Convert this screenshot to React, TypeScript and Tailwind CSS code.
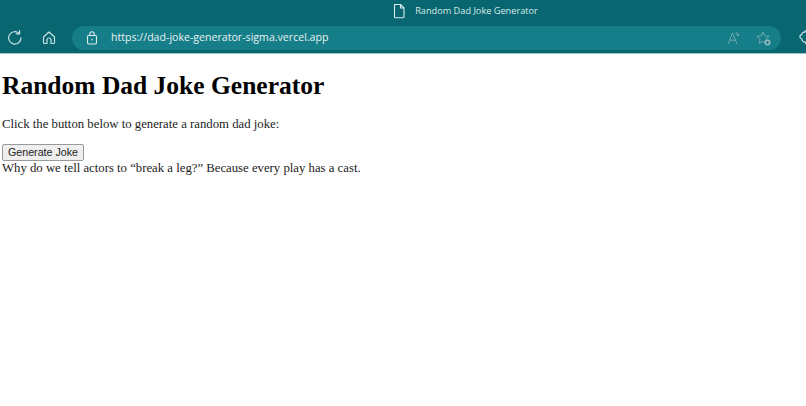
// App.tsx
const ToolbarIcon = ({ children }: { children: React.ReactNode }) => (
  <svg width="18" height="18" viewBox="0 0 18 18" fill="none" stroke="#c9e1e4" strokeWidth="1.2" strokeLinecap="round" strokeLinejoin="round">
    {children}
  </svg>
);

const App = () => {
  return (
    <div className="h-[406px] w-[806px] overflow-hidden bg-white font-['Liberation_Serif',serif] text-[#1c1c1c]">
      <div className="h-[53px] overflow-hidden bg-[#076670]">
        <div className="flex h-[26px] items-center justify-center pl-[124px] pb-[5px] font-['Open_Sans',sans-serif] text-[9.200px] text-[#dcebed]">
          <svg width="14" height="16" viewBox="0 0 14 16" fill="none" stroke="#dcebed" strokeWidth="1.1" strokeLinejoin="round" className="mr-[9px]">
            <path d="M2.500 1.500h6l3.500 3.500v8.500a1.200 1.200 0 0 1-1.200 1.200H3.700a1.200 1.200 0 0 1-1.200-1.200z" />
            <path d="M8.500 1.500V5H12" />
          </svg>
          <span>Random Dad Joke Generator</span>
        </div>

        <div className="flex h-[27px] items-start">
          <div className="ml-[6px] mt-[3px] flex w-[18px] justify-center">
            <ToolbarIcon>
              <path d="M15 8.800a6.200 6.200 0 1 1-2-4.500" />
              <path d="M13.600 1.600v3.300h-3.300" />
            </ToolbarIcon>
          </div>
          <div className="ml-[16px] mt-[3px] flex w-[18px] justify-center">
            <ToolbarIcon>
              <path d="M3.500 8 9 3l5.500 5v5.500a1 1 0 0 1-1 1h-2.500v-3.500a2 2 0 0 0-4 0v3.500H4.500a1 1 0 0 1-1-1z" />
            </ToolbarIcon>
          </div>
          <div className="ml-[14px] flex h-[24px] w-[709px] shrink-0 items-center rounded-full bg-[#167e88] pl-[12px] pr-[8px]">
            <svg width="16" height="16" viewBox="0 0 16 16" fill="none" stroke="#dcebed" strokeWidth="1.100" strokeLinejoin="round">
              <rect x="3.500" y="5.500" width="9" height="8.500" rx="1.200" />
              <path d="M5.800 5.500V4a2.200 2.200 0 0 1 4.400 0v1.500" />
              <circle cx="8" cy="9.800" r="0.800" fill="#dcebed" stroke="none" />
            </svg>
            <span className="ml-[11px] font-['Open_Sans',sans-serif] text-[10.600px] text-[#e6f1f2]">
              https://dad-joke-generator-sigma.vercel.app
            </span>
            <div className="ml-auto mr-[1px] flex items-center gap-[13px]">
              <svg width="16" height="16" viewBox="0 0 16 16" fill="none" stroke="#6fa8ae" strokeWidth="1" strokeLinejoin="round">
                <path d="M2 14 6.500 3 11 14M3.600 10.200h5.800" />
                <path d="M10.500 2.500l2.500 2.500-1 1-2.300-2.500z" />
              </svg>
              <svg width="17" height="17" viewBox="0 0 17 17" fill="none" stroke="#6fa8ae" strokeWidth="1" strokeLinejoin="round">
                <path d="M8 2l1.800 3.800 4.200.5-3 2.900.7 4.100L8 11.400l-3.700 1.900.7-4.100-3-2.900 4.200-.5z" />
                <circle cx="12.500" cy="12.500" r="3" fill="#8fb9be" stroke="none" />
                <path d="M11 12.500h3M12.500 11v3" stroke="#167e88" />
              </svg>
            </div>
          </div>
          <div className="ml-[17px] mt-[3px] shrink-0">
            <ToolbarIcon>
              <path d="M7 3.200a2 2 0 0 1 4 0c1.500-.6 3.200.8 3 2.400a2 2 0 0 1 0 4.200c.6 1.700-1 3.500-3 3a2 2 0 0 1-4 0c-1.700.5-3.400-1.200-3-3a2 2 0 0 1 0-4.200c-.4-1.600 1.400-3 3-2.400z" />
            </ToolbarIcon>
          </div>
        </div>
      </div>
      <div className="h-[1px] bg-[#9cc4c9]" />

      <div className="px-[2px]">
        <h1 className="mt-[17px] text-[25.500px] font-bold leading-[30px] text-black">Random Dad Joke Generator</h1>
        <p className="mt-[16px] text-[12.750px] leading-[15px]">Click the button below to generate a random dad joke:</p>
        <button className="mt-[12px] block h-[17px] w-[82px] whitespace-nowrap rounded-[2px] border border-[#999999] bg-[#efefef] p-0 font-['Liberation_Sans',sans-serif] text-[10.700px] leading-[15px] text-[#222222]">
          Generate Joke
        </button>
        <p className="text-[12.750px] leading-[15px]">Why do we tell actors to “break a leg?” Because every play has a cast.</p>
      </div>
    </div>
  );
};

export default App;
